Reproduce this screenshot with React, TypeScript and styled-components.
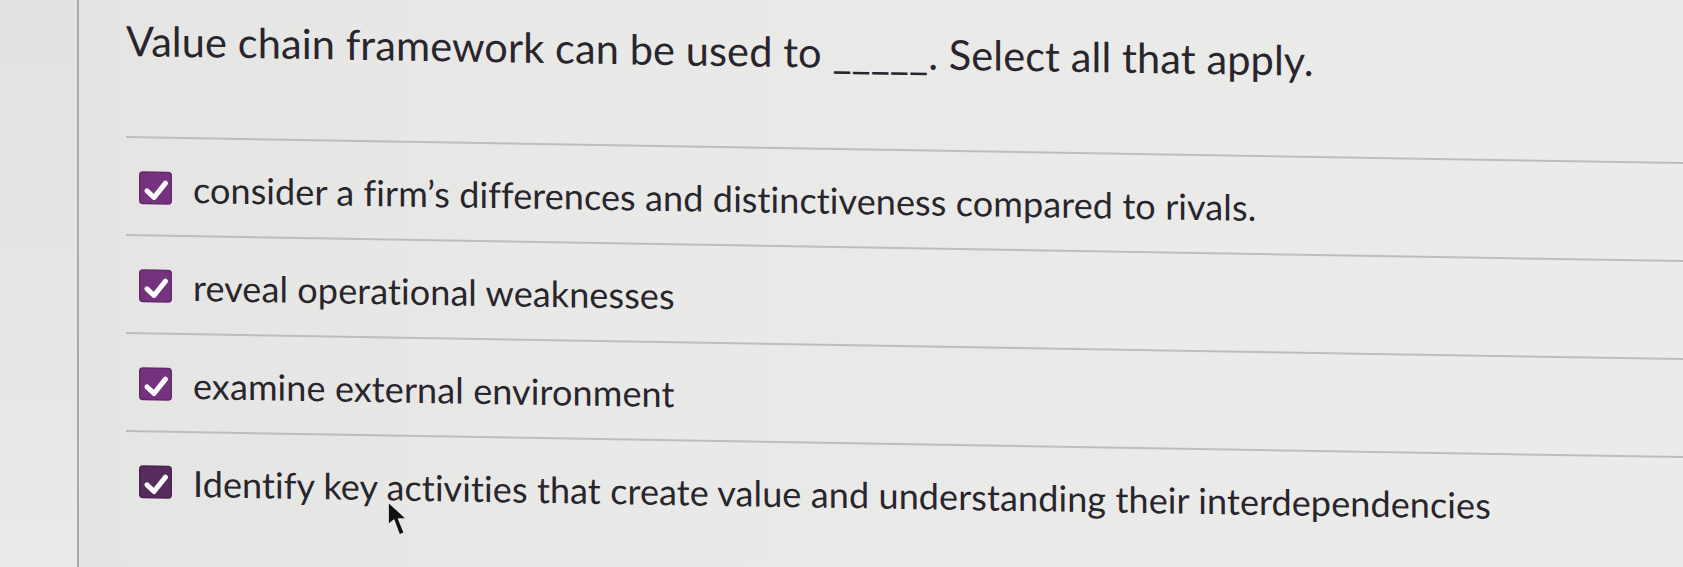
import React from "react";
import styled, { createGlobalStyle } from "styled-components";

const Global = createGlobalStyle`
  html, body { margin: 0; padding: 0; }
  body {
    background: #e7e7e5;
    font-family: Lato, "Open Sans", sans-serif;
    color: #29252d;
    overflow: hidden;
  }
`;

const Page = styled.div`
  position: relative;
  display: flex;
  width: 1683px;
  height: 567px;
  overflow: hidden;
  background: linear-gradient(90deg, #e4e4e2 0%, #e9e9e7 40%, #ebebe9 100%);
`;

const Rail = styled.div`
  width: 77px;
  flex: none;
  background: linear-gradient(180deg, #e2e3e1 0%, #e6e7e5 60%, #eaeae8 100%);
  border-right: 2px solid #a9aab2;
`;

const Main = styled.main`
  flex: 1;
  display: flex;
  flex-direction: column;
  padding: 15px 0 0 47px;
  transform: skewY(0.96deg);
  transform-origin: 47px 0;
`;

const Title = styled.h1`
  margin: 0 0 71px 0;
  font-size: 41.5px;
  line-height: 50px;
  font-weight: 400;
  letter-spacing: 0.1px;
  white-space: nowrap;
`;

const Options = styled.div`
  display: flex;
  flex-direction: column;
`;

const Row = styled.label`
  display: flex;
  align-items: center;
  gap: 21px;
  height: 93px;
  padding: 3px 0 0 13px;
  border-top: 2px solid #bdbdbd;
`;

const Box = styled.span<{ $dark?: boolean }>`
  width: 33px;
  height: 33px;
  flex: none;
  border-radius: 4px;
  background: ${(p) => (p.$dark ? "#582b5d" : "#74327f")};
  display: flex;
  align-items: center;
  justify-content: center;
  box-shadow: inset 0 0 0 1.5px rgba(0, 0, 0, 0.15);
`;

const OptionText = styled.span`
  font-size: 36px;
  line-height: 44px;
  letter-spacing: 0.1px;
  white-space: nowrap;
`;

const Cursor = styled.svg`
  position: absolute;
  left: 385px;
  top: 500px;
  width: 27px;
  height: 39px;
`;

const Check = () => (
  <svg width="33" height="33" viewBox="0 0 33 33">
    <path
      d="M8 19.5 L15 26 L26.5 11.5"
      fill="none"
      stroke="#ffffff"
      strokeWidth="5"
      strokeLinecap="round"
      strokeLinejoin="round"
    />
  </svg>
);

const options = [
  { text: "consider a firm’s differences and distinctiveness compared to rivals." },
  { text: "reveal operational weaknesses" },
  { text: "examine external environment" },
  {
    text: "Identify key activities that create value and understanding their interdependencies",
    dark: true,
  },
];

export default function App() {
  return (
    <>
      <Global />
      <Page>
        <Rail />
        <Main>
          <Title>Value chain framework can be used to _____. Select all that apply.</Title>
          <Options>
            {options.map((o) => (
              <Row key={o.text}>
                <Box $dark={o.dark}>
                  <Check />
                </Box>
                <OptionText>{o.text}</OptionText>
              </Row>
            ))}
          </Options>
        </Main>
        <Cursor viewBox="0 0 26 38">
          <path
            d="M3 2 L3 24 L8.5 19.5 L14 34 L18.5 32 L13 18.5 L21 18.5 Z"
            fill="#111"
            stroke="#e8e8e8"
            strokeWidth="1.2"
            strokeLinejoin="round"
          />
        </Cursor>
      </Page>
    </>
  );
}
